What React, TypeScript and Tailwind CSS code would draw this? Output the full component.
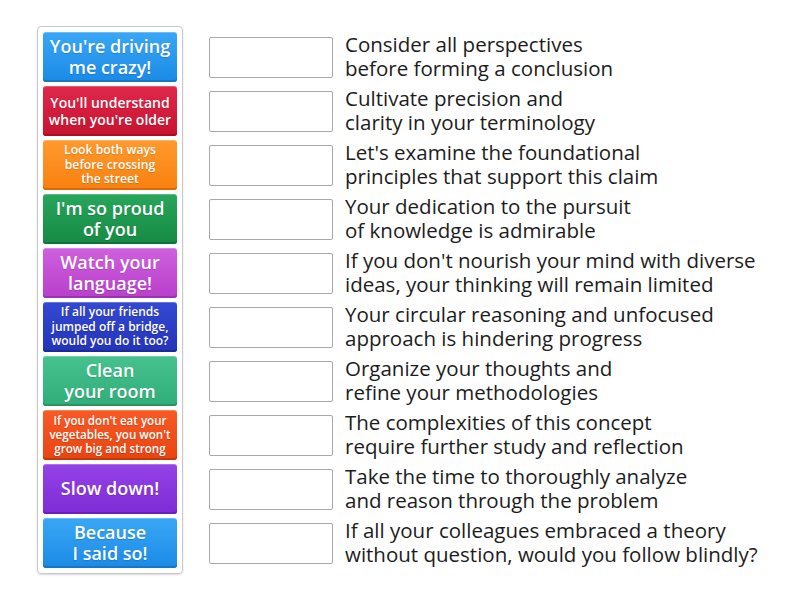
import React from "react";

type Tile = { text: string[]; size: string; from: string; to: string; edge: string };

const tiles: Tile[] = [
  { text: ["You're driving", "me crazy!"], size: "text-[18px] leading-[21.5px]", from: "#3aa7f5", to: "#1a8ae6", edge: "#1677c9" },
  { text: ["You'll understand", "when you're older"], size: "text-[14px] leading-[17px]", from: "#e0284a", to: "#c8132f", edge: "#a80f27" },
  { text: ["Look both ways", "before crossing", "the street"], size: "text-[12.2px] leading-[14.5px]", from: "#ff9a2e", to: "#f9800f", edge: "#d96c08" },
  { text: ["I'm so proud", "of you"], size: "text-[18px] leading-[21.5px]", from: "#27a65a", to: "#168a44", edge: "#117238" },
  { text: ["Watch your", "language!"], size: "text-[18px] leading-[21.5px]", from: "#cf60de", to: "#b83fcc", edge: "#9c32ad" },
  { text: ["If all your friends", "jumped off a bridge,", "would you do it too?"], size: "text-[12px] leading-[14.5px]", from: "#3448d2", to: "#2334b8", edge: "#1c2a98" },
  { text: ["Clean", "your room"], size: "text-[18px] leading-[21.5px]", from: "#46c28f", to: "#30ad78", edge: "#279263" },
  { text: ["If you don't eat your", "vegetables, you won't", "grow big and strong"], size: "text-[11.6px] leading-[14px]", from: "#f85a26", to: "#e84410", edge: "#c4380c" },
  { text: ["Slow down!"], size: "text-[18px] leading-[21.5px]", from: "#9443e6", to: "#7d2bd6", edge: "#6a22b5" },
  { text: ["Because", "I said so!"], size: "text-[18px] leading-[21.5px]", from: "#3aa7f5", to: "#1a8ae6", edge: "#1677c9" },
];

const phrases: string[][] = [
  ["Consider all perspectives", "before forming a conclusion"],
  ["Cultivate precision and", "clarity in your terminology"],
  ["Let's examine the foundational", "principles that support this claim"],
  ["Your dedication to the pursuit", "of knowledge is admirable"],
  ["If you don't nourish your mind with diverse", "ideas, your thinking will remain limited"],
  ["Your circular reasoning and unfocused", "approach is hindering progress"],
  ["Organize your thoughts and", "refine your methodologies"],
  ["The complexities of this concept", "require further study and reflection"],
  ["Take the time to thoroughly analyze", "and reason through the problem"],
  ["If all your colleagues embraced a theory", "without question, would you follow blindly?"],
];

export default function App() {
  return (
    <div
      className="w-[800px] h-[600px] bg-white flex items-start"
      style={{ fontFamily: '"Open Sans", "Noto Sans", sans-serif' }}
    >
      <div className="ml-[37px] mt-[26px] border border-[#c8c8c8] rounded-[4px] p-[5px] flex flex-col gap-[4px] shadow-[0_1px_2px_rgba(0,0,0,0.15)]">
        {tiles.map((t, i) => (
          <div
            key={i}
            className={`w-[134px] h-[50px] rounded-[3px] flex flex-col items-center justify-center text-white font-semibold text-center ${t.size}`}
            style={{
              background: `linear-gradient(${t.from}, ${t.to})`,
              boxShadow: `inset 0 1px 0 rgba(255,255,255,0.25), inset 0 -2px 0 ${t.edge}`,
              textShadow: "0 1px 1px rgba(0,0,0,0.15)",
            }}
          >
            {t.text.map((l, j) => (
              <span key={j} className="whitespace-nowrap">{l}</span>
            ))}
          </div>
        ))}
      </div>
      <div className="ml-[26px] mt-[32px] flex flex-col gap-[4px]">
        {phrases.map((p, i) => (
          <div key={i} className="h-[50px] flex items-center">
            <div className="w-[124px] h-[41px] border border-[#a8a8a8] rounded-[2px] bg-white shrink-0" />
            <div className="ml-[12px] text-[20.5px] leading-[24px] text-[#1c1c1c] -mt-[2px]">
              {p.map((l, j) => (
                <div key={j} className="whitespace-nowrap">{l}</div>
              ))}
            </div>
          </div>
        ))}
      </div>
    </div>
  );
}
